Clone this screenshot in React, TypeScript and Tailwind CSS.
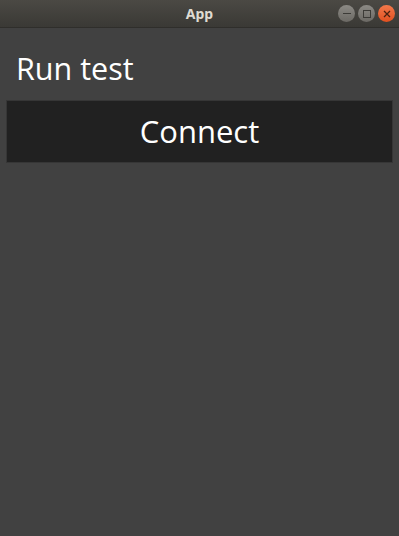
import React from 'react';

const TitleBar: React.FC = () => (
  <div className="relative h-[28px] flex items-center justify-center bg-gradient-to-b from-[#4b4944] to-[#3a3935] border-b border-[#2f2e2b]">
    <span className="text-[14px] font-bold text-[#dfdbd2] font-['Noto_Sans',sans-serif]">App</span>
    <div className="absolute right-[4px] top-[5px] flex items-center gap-[3px]">
      <div className="w-[17px] h-[17px] rounded-full bg-gradient-to-b from-[#8c8a85] to-[#6b6964] flex items-center justify-center">
        <div className="w-[8px] h-[1.5px] bg-[#3c3b37]" />
      </div>
      <div className="w-[17px] h-[17px] rounded-full bg-gradient-to-b from-[#8c8a85] to-[#6b6964] flex items-center justify-center">
        <div className="w-[8px] h-[8px] border border-[#3c3b37]" />
      </div>
      <div className="w-[17px] h-[17px] rounded-full bg-gradient-to-b from-[#f2784a] to-[#e0501f] flex items-center justify-center">
        <svg width="8" height="8" viewBox="0 0 8 8">
          <path d="M1 1 L7 7 M7 1 L1 7" stroke="#4a2110" strokeWidth="1.3" />
        </svg>
      </div>
    </div>
  </div>
);

export default function App() {
  return (
    <div className="w-[399px] h-[536px] flex flex-col bg-[#414141] font-['Open_Sans',sans-serif]">
      <TitleBar />
      <div className="flex flex-col px-[6px] pt-[20px]">
        <p className="pl-[10px] text-[30.5px] leading-[40px] text-white">Run test</p>
        <button className="mt-[12px] h-[63px] w-full bg-[#212121] border border-[#363636] text-[31px] text-white">
          Connect
        </button>
      </div>
    </div>
  );
}
